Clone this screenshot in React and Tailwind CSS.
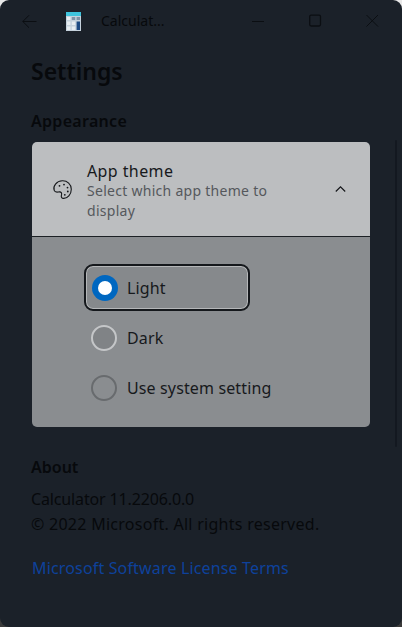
import { useState } from 'react'

function Radio({ label, selected, ring }) {
  return (
    <div className="flex h-[46px] w-[240px] items-center rounded-[8px] pl-[7px]">
      {selected ? (
        <span className="flex h-[26px] w-[26px] items-center justify-center rounded-full bg-[#0067c0]">
          <span className="h-[14px] w-[14px] rounded-full bg-white" />
        </span>
      ) : (
        <span className={`h-[26px] w-[26px] rounded-full border-2 ${ring}`} />
      )}
      <span className={`whitespace-nowrap text-[16px] leading-[22px] tracking-[0.13px] text-[#17191c] ${selected ? 'ml-[9px]' : 'ml-[10px]'}`}>{label}</span>
    </div>
  )
}

export default function App() {
  const [theme] = useState('light')

  return (
    <div className="h-[627px] w-[402px] overflow-hidden bg-[linear-gradient(to_bottom,#e8e8e8_0%,#e8e8e8_50%,#3a3a3a_50%,#3a3a3a_100%)] font-['Noto_Sans','Open_Sans',sans-serif]">
      <div className="relative h-[627px] w-[402px] overflow-hidden rounded-[9px] bg-[#1b2129] text-[#07090c]">
        {/* Barre de titre */}
        <div className="flex h-[42px] items-center">
          <svg className="ml-[22px] h-[15px] w-[15px]" viewBox="0 0 15 15" fill="none" stroke="#0b0e12" strokeWidth="1">
            <path d="M14.500 7.500H.8M7 1.300.8 7.500 7 13.700" />
          </svg>
          <svg className="ml-[29px] h-[19px] w-[15px]" viewBox="0 0 15 19">
            <rect width="15" height="19" fill="#c5d2dc" />
            <rect width="15" height="4" fill="#3fc4dc" />
            <rect x="1" y="5" width="3.4" height="3" fill="#e8eef2" />
            <rect x="5.8" y="5" width="3.4" height="3" fill="#7f93a5" />
            <rect x="10.6" y="5" width="3.4" height="3" fill="#7f93a5" />
            <rect x="1" y="9.5" width="3.4" height="3.5" fill="#e8eef2" />
            <rect x="5.8" y="9.5" width="3.4" height="3.5" fill="#e8eef2" />
            <rect x="1" y="14.5" width="3.4" height="3.5" fill="#e8eef2" />
            <rect x="5.8" y="14.5" width="3.4" height="3.5" fill="#e8eef2" />
            <rect x="10.6" y="9.5" width="3.4" height="8.5" fill="#1d4a82" />
          </svg>
          <span className="ml-[20px] text-[14px] leading-[20px]">Calculat...</span>
          <div className="ml-auto mr-[23px] flex items-center">
            <svg className="h-[14px] w-[14px]" viewBox="0 0 14 14" stroke="#0b0e12" strokeWidth="1">
              <path d="M1 7.500h12" />
            </svg>
            <svg className="ml-[43px] h-[14px] w-[14px]" viewBox="0 0 14 14" fill="none" stroke="#0b0e12" strokeWidth="1.3">
              <rect x="1.7" y="1.2" width="10.8" height="10.8" rx="1.4" />
            </svg>
            <svg className="ml-[43px] h-[14px] w-[14px]" viewBox="0 0 14 14" stroke="#0b0e12" strokeWidth="1">
              <path d="M1.500 1 13 12.500M13 1 1.500 12.500" />
            </svg>
          </div>
        </div>

        <main className="pl-[31px] pr-[32px]">
          <h1 className="mt-[10px] text-[23px] font-semibold leading-[38px]">Settings</h1>
          <h2 className="mt-[20px] text-[16px] font-semibold leading-[22px] tracking-[0.3px]">Appearance</h2>

          {/* Carte thème */}
          <section className="ml-[1px] mt-[10px] overflow-hidden rounded-[5px]">
            <div className="flex h-[94px] items-center bg-[#bcbec0]">
              <svg className="ml-[20px] h-[21px] w-[21px]" viewBox="0 0 21 21" fill="none" stroke="#15171a" strokeWidth="1.1">
                <path d="M2.200 11.400C.6 7 4.600 2 10.300 1.800c5-.2 9 3.500 9 8.400 0 5.500-4 9.200-7.500 9.200-2.600 0-2.800-2-2.300-3.500.5-1.800-.3-3.200-2.200-3-1.800.2-4.200 1.200-5.100-1.500Z" />
                <circle cx="7.500" cy="6.800" r=".9" fill="#15171a" stroke="none" />
                <circle cx="12" cy="5.600" r=".9" fill="#15171a" stroke="none" />
                <circle cx="15.500" cy="8.600" r=".9" fill="#15171a" stroke="none" />
                <circle cx="15.800" cy="12.500" r=".9" fill="#15171a" stroke="none" />
                <circle cx="12.800" cy="15.800" r=".9" fill="#15171a" stroke="none" />
              </svg>
              <div className="ml-[14px] w-[210px] pt-[4px]">
                <div className="text-[16px] leading-[20px] tracking-[0.4px] text-[#17191c]">App theme</div>
                <div className="text-[14px] leading-[20px] tracking-[0.28px] text-[#55585c]">Select which app theme to display</div>
              </div>
              <svg className="ml-[38px] h-[10px] w-[11px]" viewBox="0 0 11 10" fill="none" stroke="#15171a" strokeWidth="1.2">
                <path d="M.8 7.500 5.500 2.800l4.700 4.700" />
              </svg>
            </div>
            <div className="h-[1px] bg-[#1b2024]" />
            <div className="flex h-[190px] flex-col bg-[#8a8d90] pl-[52px] pt-[27px]">
              <div className="flex h-[47px] w-[166px] items-center rounded-[9px] border-2 border-[#15181c] bg-[#86898c] shadow-[inset_0_0_0_1px_#b5b7b9]">
                <div className="-ml-[1px]">
                  <Radio label="Light" selected={theme === 'light'} />
                </div>
              </div>
              <div className="mt-[4px]">
                <Radio label="Dark" ring="border-[#c4c6c8] bg-[#808386]" />
              </div>
              <div className="mt-[4px]">
                <Radio label="Use system setting" ring="border-[#686b6e]" />
              </div>
            </div>
          </section>

          <h2 className="mt-[29px] text-[16px] font-semibold leading-[22px]">About</h2>
          <p className="mt-[9px] text-[16px] leading-[25px]">
            <span className="tracking-[-0.14px]">Calculator 11.2206.0.0</span>
            <br />
            <span className="tracking-[0.27px]">© 2022 Microsoft. All rights reserved.</span>
          </p>
          <a className="ml-[1px] mt-[19px] block whitespace-nowrap text-[16px] leading-[25px] tracking-[0.16px] text-[#0e419b]">
            Microsoft Software License Terms
          </a>
        </main>

        {/* Barre de défilement */}
        <div className="absolute left-[395px] top-[140px] h-[307px] w-[2px] rounded-full bg-[#131820]" />
      </div>
    </div>
  )
}
